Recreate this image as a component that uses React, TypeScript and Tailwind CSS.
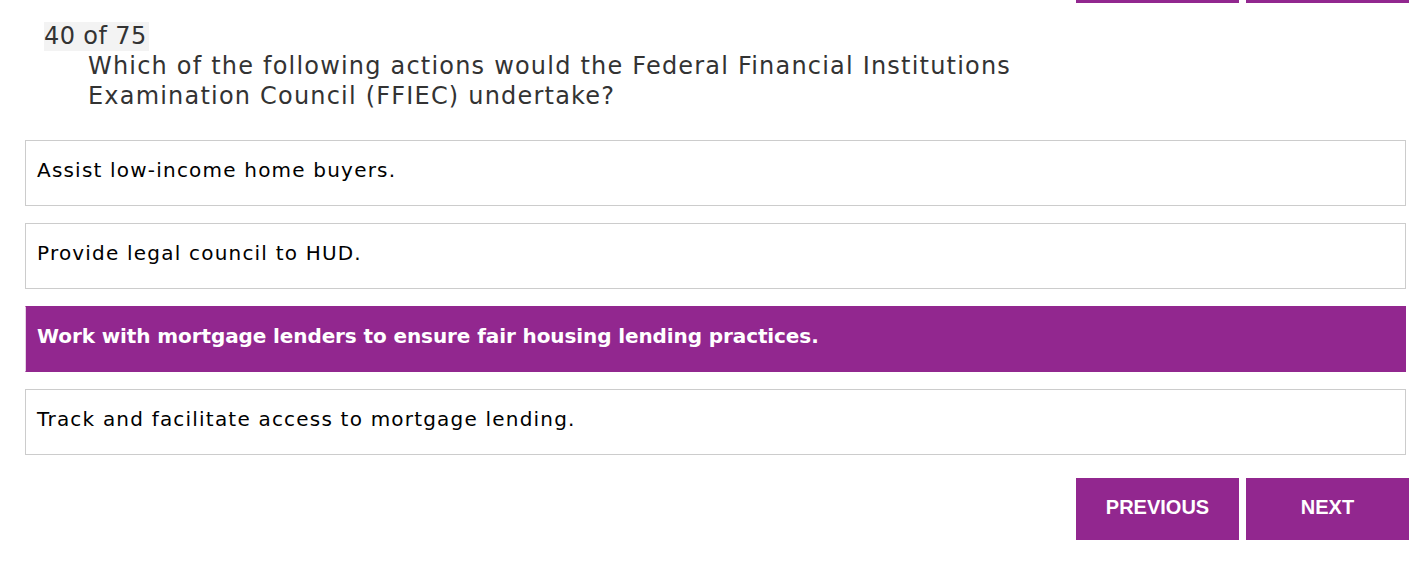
import React from 'react';

const options = [
  'Assist low-income home buyers.',
  'Provide legal council to HUD.',
  'Work with mortgage lenders to ensure fair housing lending practices.',
  'Track and facilitate access to mortgage lending.',
];

const App: React.FC = () => {
  const selected = 2;

  return (
    <div className="w-[1428px] h-[565px] bg-white overflow-hidden font-['DejaVu_Sans',sans-serif]">
      {/* bottom edge of the nav buttons above, scrolled off */}
      <div className="flex justify-end gap-[7px] pr-[19px]">
        <div className="w-[163px] h-[3px] bg-[#92278f]" />
        <div className="w-[163px] h-[3px] bg-[#92278f]" />
      </div>

      <div className="pt-[19px] pl-[44px]">
        <span className="inline-block bg-[#f3f3f3] text-[#333] text-[24px] leading-[29px] tracking-[0.4px] pr-[2px]">40 of 75</span>
      </div>
      <h2 className="pl-[88px] text-[#333] text-[24px] leading-[30px] tracking-[1.2px] font-normal">
        Which of the following actions would the Federal Financial Institutions
        <br />
        Examination Council (FFIEC) undertake?
      </h2>

      <div className="mt-[29px] pl-[25px] pr-[22px] flex flex-col gap-[17px]">
        {options.map((opt, i) => (
          <div
            key={i}
            className={
              i === selected
                ? 'h-[66px] flex items-center px-[11px] pb-[6px] bg-[#92278f] border border-[#92278f] border-l-[#e6d0e5] text-white text-[20px] font-bold tracking-[-0.1px]'
                : 'h-[66px] flex items-center px-[11px] pb-[6px] bg-white border border-[#cccccc] text-black text-[20px] tracking-[1.2px]'
            }
          >
            {opt}
          </div>
        ))}
      </div>

      <div className="mt-[23px] flex justify-end gap-[7px] pr-[19px]">
        <button className="w-[163px] h-[62px] pb-[4px] bg-[#92278f] text-white font-bold text-[20px] uppercase font-['Liberation_Sans',Arial,sans-serif]">
          Previous
        </button>
        <button className="w-[163px] h-[62px] pb-[4px] bg-[#92278f] text-white font-bold text-[20px] uppercase font-['Liberation_Sans',Arial,sans-serif]">
          Next
        </button>
      </div>
    </div>
  );
};

export default App;
